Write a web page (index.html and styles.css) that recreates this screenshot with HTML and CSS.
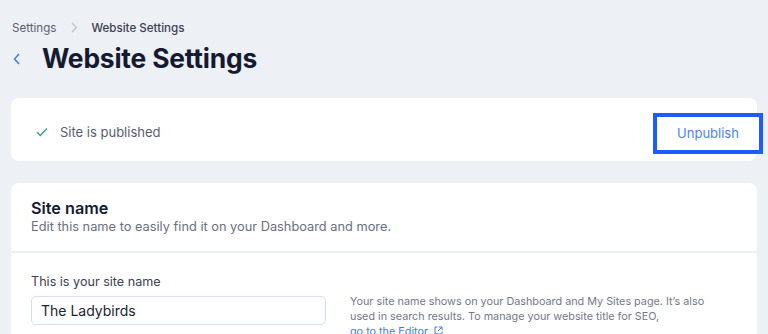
FILE: index.html
```html
<!DOCTYPE html>
<html lang="en">

<head>
    <meta charset="UTF-8">
    <meta name="viewport" content="width=device-width, initial-scale=1.0">
    <title>Website Settings</title>
    <link rel="stylesheet" href="styles.css">
</head>

<body>
    <div class="page">
        <div class="breadcrumb">
            <a href="#">Settings</a>
            <span class="crumb-sep">
                <svg width="7" height="11" viewBox="0 0 7 11"><path d="M1 1l4.5 4.5L1 10" fill="none" stroke="#b9bec9" stroke-width="1.1"/></svg>
            </span>
            <span class="crumb-current">Website Settings</span>
        </div>

        <div class="title-row">
            <a href="#" class="back">
                <svg width="8" height="12" viewBox="0 0 8 12"><path d="M6 1L1.5 6 6 11" fill="none" stroke="#3b7cf5" stroke-width="1.5"/></svg>
            </a>
            <h1>Website Settings</h1>
        </div>

        <div class="card status-card">
            <div class="status">
                <svg width="12" height="10" viewBox="0 0 12 10"><path d="M1 5.2l3.3 3.3L11 1.5" fill="none" stroke="#3da27a" stroke-width="1.4"/></svg>
                <span>Site is published</span>
            </div>
            <button class="unpublish">Unpublish</button>
        </div>

        <div class="card name-card">
            <div class="card-head">
                <h2>Site name</h2>
                <p>Edit this name to easily find it on your Dashboard and more.</p>
            </div>
            <div class="card-body">
                <div class="form-group">
                    <label for="siteName">This is your site name</label>
                    <input type="text" id="siteName" value="The Ladybirds">
                </div>
                <div class="hint">
                    <p>Your site name shows on your Dashboard and My Sites page. It’s also used in search results. To manage your website title for SEO,</p>
                    <a href="#">go to the Editor<svg width="9" height="9" viewBox="0 0 9 9"><path d="M3.5 1H1v7h7V5.5M5 1h3v3M8 1L4 5" fill="none" stroke="#3b7cf5" stroke-width="1"/></svg></a>
                </div>
            </div>
        </div>
    </div>
</body>

</html>
```

FILE: styles.css
```css
body, html {
    margin: 0;
    padding: 0;
    font-family: Inter, "Noto Sans", sans-serif;
    background-color: #edf0f4;
    color: #20232f;
}

.page {
    padding: 0 11px;
}

.breadcrumb {
    display: flex;
    align-items: center;
    padding: 19px 0 0 1px;
    font-size: 11.6px;
    height: 17px;
}
.breadcrumb a {
    color: #5b6070;
    text-decoration: none;
}
.crumb-sep {
    display: flex;
    margin: 0 13px 0 15px;
}
.crumb-current {
    color: #3c4050;
    font-weight: 500;
}

.title-row {
    display: flex;
    align-items: center;
    margin-top: -2px;
    height: 48px;
}
.back {
    display: flex;
    margin: 2px 21px 0 2px;
}
h1 {
    margin: 0;
    font-size: 26.4px;
    font-weight: 700;
    color: #151a33;
    letter-spacing: -0.2px;
}

.card {
    background-color: white;
    border-radius: 8px;
}

.status-card {
    margin-top: 16px;
    height: 63px;
    display: flex;
    align-items: center;
    justify-content: space-between;
    padding-left: 25px;
}
.status {
    display: flex;
    align-items: center;
    gap: 12px;
    margin-top: 4px;
    font-size: 13px;
    color: #585d70;
}
.unpublish {
    margin: 7px -6px 0 0;
    width: 110px;
    height: 41px;
    border: 4px solid #1c5cff;
    background-color: white;
    color: #4a82f5;
    font-family: inherit;
    font-size: 13px;
    cursor: pointer;
}

.name-card {
    margin-top: 22px;
}
.card-head {
    padding: 16px 20px 16px;
    border-bottom: 2px solid #eceff5;
}
h2 {
    margin: 0;
    font-size: 16.2px;
    line-height: 19px;
    font-weight: 600;
    color: #151a33;
}
.card-head p {
    margin: 1px 0 0;
    font-size: 12.8px;
    line-height: 16px;
    color: #6a6f80;
}

.card-body {
    display: flex;
    padding: 21px 20px 10px;
    gap: 24px;
}
.form-group {
    width: 295px;
}
label {
    display: block;
    font-size: 12.6px;
    line-height: 15px;
    color: #3c4050;
    margin-bottom: 7px;
}
input {
    box-sizing: border-box;
    width: 100%;
    height: 29px;
    padding: 0 9px;
    border: 1px solid #d3e0f7;
    border-radius: 5px;
    font-family: inherit;
    font-size: 14px;
    color: #20232f;
}
.hint {
    margin-top: 20px;
    width: 364px;
    font-size: 10.8px;
    line-height: 15px;
    color: #747888;
}
.hint p {
    margin: 0;
}
.hint a {
    color: #3b7cf5;
    text-decoration: none;
}
.hint svg {
    margin-left: 6px;
}
```
